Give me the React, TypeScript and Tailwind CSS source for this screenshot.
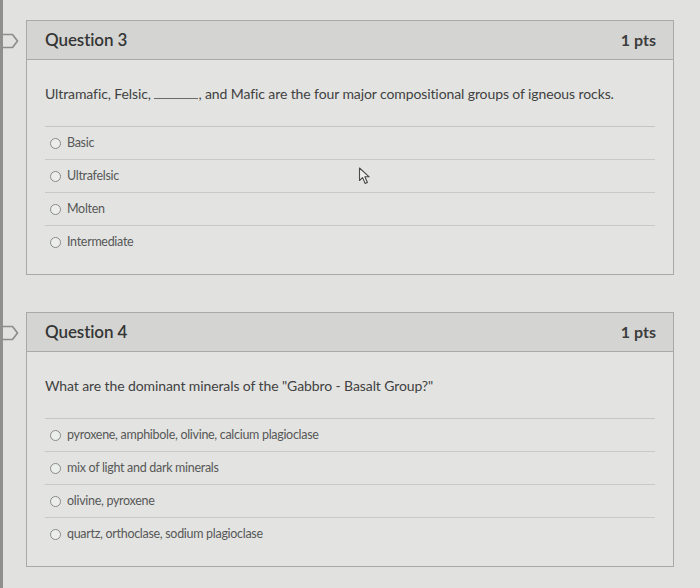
import React from "react";

type Question = {
	title: string;
	points: string;
	text: React.ReactNode;
	options: string[];
};

const questions: Question[] = [
	{
		title: "Question 3",
		points: "1 pts",
		text: (
			<>
				Ultramafic, Felsic,{" "}
				<span className="inline-block w-[44px] border-b border-[#6b6c6a] align-baseline" />
				, and Mafic are the four major compositional groups of igneous rocks.
			</>
		),
		options: ["Basic", "Ultrafelsic", "Molten", "Intermediate"],
	},
	{
		title: "Question 4",
		points: "1 pts",
		text: 'What are the dominant minerals of the "Gabbro - Basalt Group?"',
		options: [
			"pyroxene, amphibole, olivine, calcium plagioclase",
			"mix of light and dark minerals",
			"olivine, pyroxene",
			"quartz, orthoclase, sodium plagioclase",
		],
	},
];

function FlagIcon() {
	return (
		<svg width="19" height="16" viewBox="0 0 19 16" className="mt-[13px] -ml-[3px]">
			<path
				d="M1 1.5 H12.5 L17.5 8 L12.5 14.5 H1 Z"
				fill="none"
				stroke="#8d8e8c"
				strokeWidth="1.7"
				strokeLinejoin="round"
			/>
		</svg>
	);
}

function Radio() {
	return (
		<span className="inline-block size-[11px] shrink-0 rounded-full border border-[#8a8b89] bg-[#eceeeb]" />
	);
}

function QuestionCard({ q, cursor }: { q: Question; cursor?: boolean }) {
	return (
		<div className="flex">
			<div className="w-[23px] shrink-0">
				<FlagIcon />
			</div>
			<div className="w-[648px] border border-[#a9aaa8] bg-[#e3e4e2]">
				<div className="flex h-[39px] items-center justify-between border-b border-[#a9aaa8] bg-[#d4d5d3] pl-[18px] pr-[17px]">
					<h2 className="text-[17px] font-semibold tracking-[-0.1px] text-[#353535]">
						{q.title}
					</h2>
					<span className="text-[16px] font-bold text-[#3d3d3d]">{q.points}</span>
				</div>
				<div className="px-[18px] pb-[15px]">
					<p className="border-b border-[#c5c6c4] pt-[26px] pb-[24px] text-[14px] leading-[16px] tracking-[-0.1px] text-[#414141]">
						{q.text}
					</p>
					{q.options.map((opt, i) => (
						<div
							key={opt}
							className={`relative flex h-[33px] items-center gap-[6px] pl-[5px] ${
								i < q.options.length - 1 ? "border-b border-[#c9cac8]" : ""
							}`}
						>
							<Radio />
							<span className="text-[12.5px] tracking-[-0.3px] text-[#575857]">{opt}</span>
							{cursor && i === 1 && (
								<svg
									width="14"
									height="18"
									viewBox="0 0 14 18"
									className="absolute left-[313px] top-[7px]"
								>
									<path
										d="M1.5 1 L1.5 13.5 L4.6 10.6 L7.2 16.5 L9.4 15.5 L6.9 9.8 L11.2 9.8 Z"
										fill="#eeeeec"
										stroke="#4a4a4a"
										strokeWidth="1.1"
										strokeLinejoin="round"
									/>
								</svg>
							)}
						</div>
					))}
				</div>
			</div>
		</div>
	);
}

export default function App() {
	return (
		<div
			className="min-h-[588px] w-[700px] overflow-hidden border-l-[3px] border-[#8f908e] bg-[#e1e2e0] pt-[20px]"
			style={{ fontFamily: "Lato, 'Open Sans', sans-serif" }}
		>
			<div className="flex flex-col gap-[37px]">
				{questions.map((q, i) => (
					<QuestionCard key={q.title} q={q} cursor={i === 0} />
				))}
			</div>
		</div>
	);
}
